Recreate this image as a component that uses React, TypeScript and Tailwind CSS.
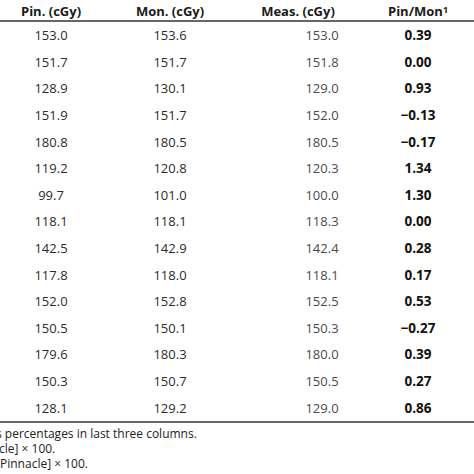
const rows: [string, string, string, string][] = [
  ["153.0", "153.6", "153.0", "0.39"],
  ["151.7", "151.7", "151.8", "0.00"],
  ["128.9", "130.1", "129.0", "0.93"],
  ["151.9", "151.7", "152.0", "\u22120.13"],
  ["180.8", "180.5", "180.5", "\u22120.17"],
  ["119.2", "120.8", "120.3", "1.34"],
  ["99.7", "101.0", "100.0", "1.30"],
  ["118.1", "118.1", "118.3", "0.00"],
  ["142.5", "142.9", "142.4", "0.28"],
  ["117.8", "118.0", "118.1", "0.17"],
  ["152.0", "152.8", "152.5", "0.53"],
  ["150.5", "150.1", "150.3", "\u22120.27"],
  ["179.6", "180.3", "180.0", "0.39"],
  ["150.3", "150.7", "150.5", "0.27"],
  ["128.1", "129.2", "129.0", "0.86"],
];

const cols = "grid grid-cols-[102px_136px_120px_116px]";

export default function App() {
  return (
    <div className="h-[474px] w-[474px] overflow-hidden bg-white font-['Open_Sans',sans-serif] text-[#2b2b2b]">
      <div className={`${cols} h-[22px] items-start border-b-2 border-[#666] pt-[2px] text-[13px] font-bold leading-[18px] text-[#1a1a1a]`}>
        <div className="text-center">Pin. (cGy)</div>
        <div className="text-center">Mon. (cGy)</div>
        <div className="text-center">Meas. (cGy)</div>
        <div className="pl-[4px] text-center">
          Pin/Mon<sup className="relative -top-[3px] text-[9px] font-bold">1</sup>
        </div>
      </div>

      <div className="h-[399px]">
        {rows.map((r, i) => (
          <div key={i} className={`${cols} h-[26.6px] items-center text-[13px] leading-[18px]`}>
            <div className="text-center">{r[0]}</div>
            <div className="text-center">{r[1]}</div>
            <div className="pl-[48px] text-center text-[#4a4a4a]">{r[2]}</div>
            <div className="pl-[4px] text-center text-[13.5px] font-bold text-[#111]">{r[3]}</div>
          </div>
        ))}
      </div>

      <div className="border-t-2 border-[#666] pt-[3px] text-[12px] leading-[15px] text-[#222]">
        <p className="-ml-[4px] whitespace-nowrap">s percentages in last three columns.</p>
        <p className="-ml-[1px] whitespace-nowrap">cle] × 100.</p>
        <p className="whitespace-nowrap">Pinnacle] × 100.</p>
      </div>
    </div>
  );
}
